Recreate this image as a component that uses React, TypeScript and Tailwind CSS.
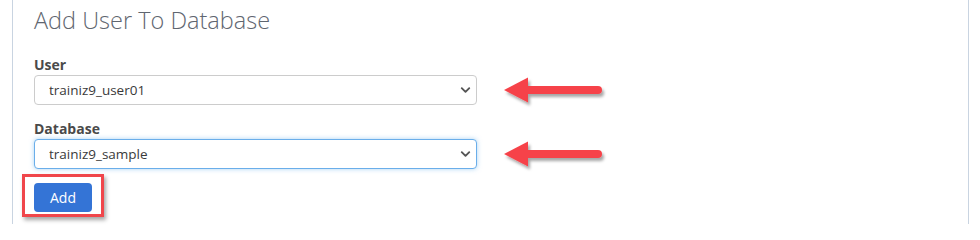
import { ChevronDown } from 'lucide-react'

interface SelectFieldProps {
  id: string
  label: string
  value: string
  focused?: boolean
  className?: string
}

function PointerArrow({ id }: { id: string }) {
  return (
    <svg width="110" height="30" viewBox="0 0 110 30" className="ml-[27px] shrink-0 overflow-visible">
      <defs>
        <filter id={id} x="-20%" y="-50%" width="140%" height="200%">
          <feDropShadow dx="2" dy="3" stdDeviation="1.6" floodColor="#000" floodOpacity="0.35" />
        </filter>
      </defs>
      <g filter={`url(#${id})`} fill="#f6434a" stroke="#f6434a">
        <polygon points="0,15 24,2.5 24,27.5" stroke="none" />
        <line x1="22" y1="15" x2="94" y2="15" strokeWidth="8" strokeLinecap="round" />
      </g>
    </svg>
  )
}

function SelectField({ id, label, value, focused, className }: SelectFieldProps) {
  return (
    <div className={className}>
      <label htmlFor={id} className="block text-[14px] leading-[20px] font-bold text-[#4a4a4a]">
        {label}
      </label>
      <div className="flex items-center">
        <div className="relative w-[443px]">
          <select
            id={id}
            defaultValue={value}
            className={`block h-[30px] w-full appearance-none rounded-[4px] border bg-white pl-[14px] pr-8 text-[13.5px] text-[#3a3a3a] outline-none ${
              focused
                ? 'border-[#6aaeea] shadow-[0_0_5px_rgba(102,175,233,0.55)]'
                : 'border-[#cccccc]'
            }`}
          >
            <option value={value}>{value}</option>
          </select>
          <ChevronDown
            size={15}
            strokeWidth={3}
            className="pointer-events-none absolute right-[4px] top-1/2 -translate-y-1/2 text-[#555]"
          />
        </div>
        <PointerArrow id={`shadow-${id}`} />
      </div>
    </div>
  )
}

export default function App() {
  return (
    <div className="min-h-screen bg-white font-['Open_Sans','Liberation_Sans',sans-serif]">
      <div className="ml-[12px] w-[957px] border-x border-[#c9d4e1] px-[21px] pt-[4px] pb-3">
        <h2 className="text-[23.5px] leading-[32px] font-light text-[#5f6670]">Add User To Database</h2>

        <form onSubmit={(e) => e.preventDefault()}>
          <SelectField id="user" label="User" value="trainiz9_user01" className="mt-[19px]" />
          <SelectField
            id="database"
            label="Database"
            value="trainiz9_sample"
            focused
            className="mt-[14px]"
          />

          {/* Add button with highlight box */}
          <div className="relative mt-[14px] inline-block">
            <button
              type="submit"
              className="h-[29px] rounded-[4px] bg-[#3474d6] px-[16px] text-[14px] font-medium text-white"
            >
              Add
            </button>
            <span className="pointer-events-none absolute -left-[12px] -top-[9px] h-[43px] w-[82px] border-[3px] border-[#f0464b] shadow-[2px_3px_4px_rgba(0,0,0,0.35)]" />
          </div>
        </form>
      </div>
    </div>
  )
}
